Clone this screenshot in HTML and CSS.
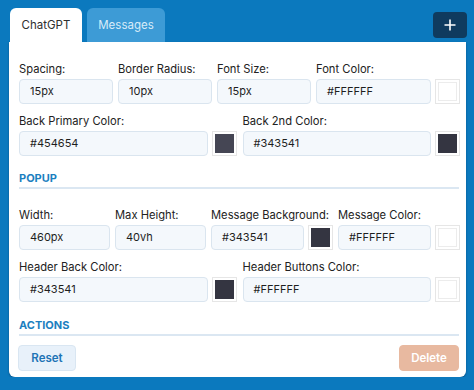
FILE: index.html
```html
<!DOCTYPE html>
<html>
<head>
<meta charset="utf-8">
<link rel="stylesheet" href="styles.css">
</head>
<body>
<div class="app">
  <div class="topbar">
    <div class="tabs">
      <div class="tab active tab-chat">ChatGPT</div>
      <div class="tab tab-msg">Messages</div>
    </div>
    <button class="add" type="button" aria-label="Add">
      <svg width="12" height="12" viewBox="0 0 12 12"><path d="M6 0.5V11.5M0.5 6H11.5" stroke="#fff" stroke-width="1.6" fill="none"/></svg>
    </button>
  </div>
  <div class="panel">
    <div class="grid row-a">
      <div class="field"><label>Spacing:</label><div class="input">15px</div></div>
      <div class="field"><label>Border Radius:</label><div class="input">10px</div></div>
      <div class="field"><label>Font Size:</label><div class="input">15px</div></div>
      <div class="field"><label>Font Color:</label><div class="color"><div class="input">#FFFFFF</div><span class="swatch"><span class="chip white"></span></span></div></div>
    </div>
    <div class="grid row-half">
      <div class="field"><label>Back Primary Color:</label><div class="color"><div class="input">#454654</div><span class="swatch"><span class="chip c454654"></span></span></div></div>
      <div class="field"><label>Back 2nd Color:</label><div class="color"><div class="input">#343541</div><span class="swatch"><span class="chip c343541"></span></span></div></div>
    </div>
    <h3 class="section">POPUP</h3>
    <div class="grid row-b">
      <div class="field"><label>Width:</label><div class="input">460px</div></div>
      <div class="field"><label>Max Height:</label><div class="input">40vh</div></div>
      <div class="field"><label>Message Background:</label><div class="color"><div class="input">#343541</div><span class="swatch"><span class="chip c343541"></span></span></div></div>
      <div class="field"><label>Message Color:</label><div class="color"><div class="input">#FFFFFF</div><span class="swatch"><span class="chip white"></span></span></div></div>
    </div>
    <div class="grid row-half">
      <div class="field"><label>Header Back Color:</label><div class="color"><div class="input">#343541</div><span class="swatch"><span class="chip c343541"></span></span></div></div>
      <div class="field"><label>Header Buttons Color:</label><div class="color"><div class="input">#FFFFFF</div><span class="swatch"><span class="chip white"></span></span></div></div>
    </div>
    <h3 class="section section-actions">ACTIONS</h3>
    <div class="actions">
      <button class="btn reset" type="button">Reset</button>
      <button class="btn delete" type="button">Delete</button>
    </div>
  </div>
</div>
</body>
</html>
```
FILE: styles.css
```css
html, body {
  margin: 0;
  padding: 0;
  background: #0b79be;
  font-family: Inter, "Liberation Sans", Arial, sans-serif;
}
.app {
  width: 457px;
  margin: 0 8px 0 9px;
  padding-top: 8px;
}
.topbar {
  display: flex;
  align-items: flex-end;
  justify-content: space-between;
  height: 34px;
}
.tabs {
  display: flex;
  gap: 5px;
  height: 34px;
  margin-left: 1px;
}
.tab {
  height: 34px;
  line-height: 34px;
  text-align: center;
  font-size: 11.5px;
  color: #d8ecf9;
  background: #3d9bd6;
  border-radius: 6px 6px 0 0;
}
.tab-chat { width: 72px; }
.tab-msg { width: 78px; }
.tab.active {
  background: #fff;
  color: #2e2e2e;
}
.add {
  width: 34px;
  height: 26px;
  margin: 0 -1px 4px 0;
  padding: 0;
  border: none;
  border-radius: 4px;
  background: #0f3b5f;
  display: flex;
  align-items: center;
  justify-content: center;
}
.panel {
  background: #fff;
  border-radius: 0 0 6px 6px;
  padding: 20px 6px 6px 10px;
  box-shadow: 0 1px 2px rgba(8, 50, 90, 0.6);
}
.grid {
  display: grid;
  gap: 5px;
  margin-bottom: 10px;
}
.row-a { grid-template-columns: 94px 94px 94px 1fr; }
.row-b { grid-template-columns: 91px 91px 1fr 1fr; }
.row-half { grid-template-columns: 1fr 1fr; gap: 6px; }
.field {
  display: flex;
  flex-direction: column;
  min-width: 0;
}
label {
  font-size: 11.2px;
  line-height: 14px;
  color: #222;
  margin-bottom: 3px;
  white-space: nowrap;
}
.input {
  height: 23px;
  line-height: 23px;
  border: 1px solid #dae5ef;
  background: #f4f8fc;
  border-radius: 4px;
  padding-left: 10px;
  font-size: 11px;
  color: #1e1e1e;
  flex: 1;
  min-width: 0;
}
.color {
  display: flex;
  gap: 4px;
}
.swatch {
  width: 19px;
  height: 19px;
  padding: 2px;
  border: 1px solid #e6e6e6;
  background: #fff;
  flex: none;
  display: flex;
}
.chip {
  flex: 1;
}
.chip.white { background: #fff; border: 1px solid #ececec; }
.c454654 { background: #454654; }
.c343541 { background: #343541; }
.section {
  margin: 15px 1px 19px 0;
  padding-bottom: 2px;
  border-bottom: 2px solid #dbe7f2;
  font-size: 11px;
  line-height: 14px;
  font-weight: 700;
  color: #1c7fc0;
}
.section-actions {
  margin-top: 16px;
  margin-bottom: 9px;
}
.actions {
  display: flex;
  justify-content: space-between;
  padding-right: 1px;
}
.btn {
  height: 26px;
  padding: 0;
  border-radius: 4px;
  font-family: Inter, "Liberation Sans", Arial, sans-serif;
  font-size: 11.5px;
  font-weight: 600;
  cursor: pointer;
}
.reset {
  width: 58px;
  margin-left: -1px;
  background: #e8f1fa;
  border: 1px solid #d9e6f2;
  color: #1e74b6;
}
.delete {
  width: 60px;
  background: #e8b9a0;
  border: 1px solid #e8b9a0;
  color: #fff;
}
```
